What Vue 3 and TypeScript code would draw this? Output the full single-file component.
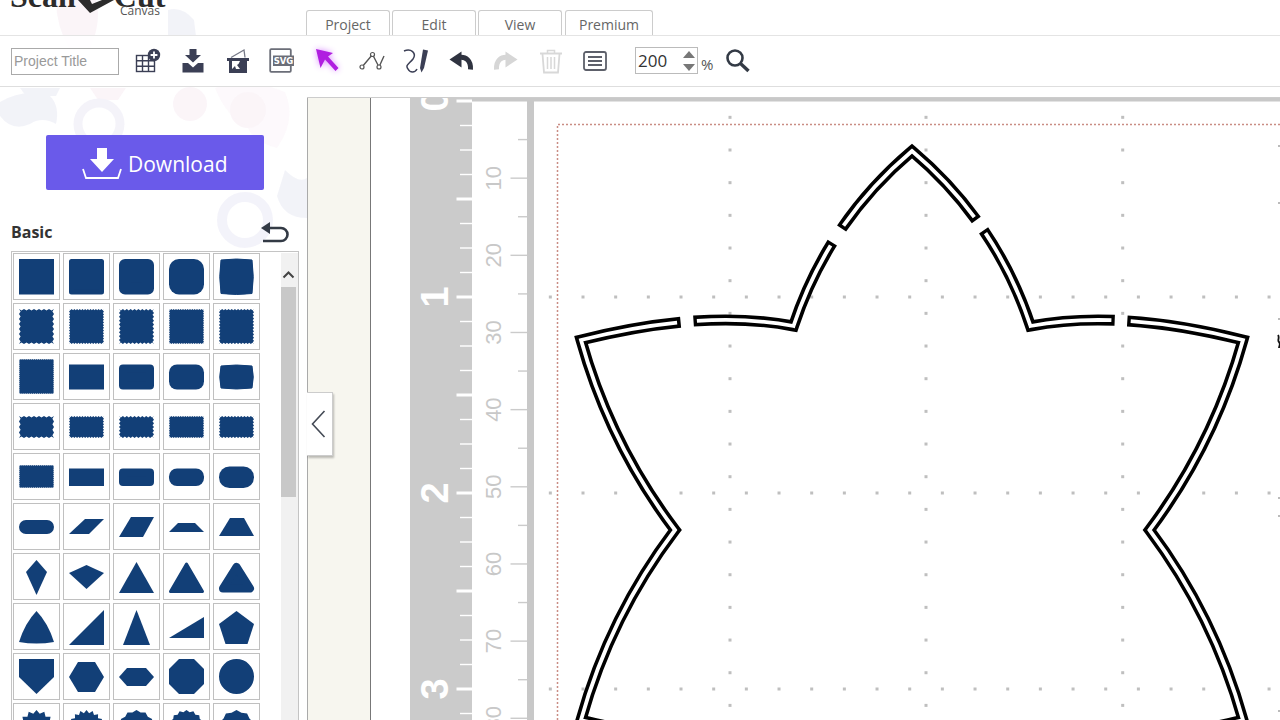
<script setup lang="ts">
type Pt = [number, number]

interface Shape {
  d: string
  sw?: number
}

// ---- shape tiles (47px box, artwork spans roughly 6..41) ----
function poly(points: number[][], sw = 0): Shape {
  return { d: 'M' + points.map((p) => p.join(' ')).join('L') + 'Z', sw }
}

function rect(y0: number, y1: number, r = 0): Shape {
  return poly(
    [
      [6 + r, y0 + r],
      [41 - r, y0 + r],
      [41 - r, y1 - r],
      [6 + r, y1 - r],
    ],
    r * 2,
  )
}

function barrel(y0: number, y1: number): Shape {
  return {
    d: `M8 ${y0 + 1}Q23.5 ${y0 - 1} 39 ${y0 + 1}Q41.5 ${(y0 + y1) / 2} 39 ${y1 - 1}Q23.5 ${y1 + 1} 8 ${y1 - 1}Q5.5 ${(y0 + y1) / 2} 8 ${y0 + 1}Z`,
    sw: 1,
  }
}

// postage-stamp outline: teeth walked along all four edges
function stamp(y0: number, y1: number, step: number, amp: number): Shape {
  const pts: number[][] = []
  const edge = (ax: number, ay: number, bx: number, by: number, nx: number, ny: number) => {
    const len = Math.hypot(bx - ax, by - ay)
    const n = Math.round(len / step)
    for (let i = 0; i < n; i++) {
      const t = i / n
      const m = (i + 0.5) / n
      pts.push([ax + (bx - ax) * t, ay + (by - ay) * t])
      pts.push([ax + (bx - ax) * m + nx * amp, ay + (by - ay) * m + ny * amp])
    }
  }
  edge(6, y0, 41, y0, 0, 1)
  edge(41, y0, 41, y1, -1, 0)
  edge(41, y1, 6, y1, 0, -1)
  edge(6, y1, 6, y0, 1, 0)
  return poly(pts.map((p) => [+p[0].toFixed(2), +p[1].toFixed(2)]))
}

function burst(n: number, r1: number, r2: number): Shape {
  const pts: number[][] = []
  for (let i = 0; i < n * 2; i++) {
    const a = (Math.PI * i) / n - Math.PI / 2
    const r = i % 2 ? r2 : r1
    pts.push([+(23.5 + r * Math.cos(a)).toFixed(2), +(25 + r * Math.sin(a)).toFixed(2)])
  }
  return poly(pts)
}

const shapes: Shape[] = [
  rect(6, 41.5),
  rect(6, 41.5, 2.5),
  rect(6, 41.5, 6),
  rect(6, 41.5, 10),
  barrel(6, 41.5),

  stamp(6, 41, 5, 1.6),
  stamp(6, 41, 2.6, 1.2),
  stamp(6, 41, 4, 1.5),
  stamp(6, 41, 2.4, 0.9),
  stamp(6, 41, 3.2, 1.3),

  stamp(6, 41, 2, 0.8),
  rect(11.5, 36.5),
  rect(11.5, 36.5, 4),
  rect(11.5, 36.5, 8),
  barrel(12, 36),

  stamp(13, 35, 5, 1.6),
  stamp(13, 35, 2.6, 1.2),
  stamp(13, 35, 4, 1.5),
  stamp(13, 35, 2.4, 0.9),
  stamp(13, 35, 3.2, 1.3),

  stamp(12, 35, 2, 0.8),
  rect(15.5, 33),
  rect(15.5, 33, 4),
  rect(15.5, 33, 8),
  rect(13.5, 35, 10.5),

  rect(17, 31, 7),
  poly([[6, 31], [22, 16], [41, 16], [26, 31]]),
  poly([[6, 34], [18, 14], [41, 14], [30, 34]]),
  poly([[6, 29], [15, 20], [32, 20], [41, 29]]),
  poly([[6, 33], [17, 15], [31, 15], [41, 33]]),

  poly([[23.5, 7], [34, 19], [23.5, 42], [13, 19]]),
  { d: 'M6 20Q15 16 23.5 12Q32 16 41 20L23.5 36Z' },
  poly([[23.5, 9], [41, 40], [6, 40]]),
  poly([[23.5, 11], [39.5, 38.5], [7.5, 38.5]], 3),
  poly([[23.5, 14], [37, 35.5], [10, 35.5]], 8),

  { d: 'M23.5 8Q35 20 41 39Q23.5 42 6 39Q12 20 23.5 8Z' },
  poly([[41, 7], [41, 42], [6, 42]]),
  poly([[23.5, 7], [37, 42], [10, 42]]),
  poly([[41, 14], [41, 35], [6, 35]]),
  poly([[23.5, 8], [41, 21], [34.5, 41], [12.5, 41], [6, 21]]),

  poly([[6, 6], [41, 6], [41, 24], [23.5, 41], [6, 24]]),
  poly([[6, 24], [15, 9], [32, 9], [41, 24], [32, 39], [15, 39]]),
  poly([[6, 24], [14, 15], [33, 15], [41, 24], [33, 33], [14, 33]]),
  poly([[16, 6], [31, 6], [41, 16], [41, 31], [31, 41], [16, 41], [6, 31], [6, 16]]),
  { d: 'M6 23.5A17.5 17.5 0 0 1 41 23.5A17.5 17.5 0 0 1 6 23.5Z' },

  burst(14, 18, 14.5),
  burst(18, 18, 15),
  burst(12, 18, 16),
  burst(16, 18, 16),
  burst(10, 18, 16),
]

// ---- rulers ----
const inchTicks = Array.from({ length: 26 }, (_, k) => ({ y: 101 + k * 24.5, major: k % 4 === 0 }))
const inchLabels = [0, 1, 2, 3].map((n) => ({ n, y: 101 + n * 196 }))
const mmTicks = Array.from({ length: 17 }, (_, k) => ({ y: 101 + k * 38.58, major: k % 2 === 0 }))
const mmLabels = [10, 20, 30, 40, 50, 60, 70, 80].map((n) => ({ n, y: 101 + n * 7.716 }))

// ---- canvas grid dots ----
const dots: Pt[] = []
for (const x of [730, 926, 1122.7]) {
  for (let k = 0; k < 19; k++) dots.push([x, 101 + 16.33 + k * 32.67])
}
for (const y of [297, 493, 689]) {
  for (let k = 0; k < 23; k++) dots.push([534 + 16.33 + k * 32.67, y])
}

// ---- star outline, cut into runs between the gaps ----
interface Curve {
  a: Pt
  c: Pt
  b: Pt
}
const lerp = (p: Pt, q: Pt, t: number): Pt => [p[0] + (q[0] - p[0]) * t, p[1] + (q[1] - p[1]) * t]
const blossom = (k: Curve, t0: number, t1: number): Pt => lerp(lerp(k.a, k.c, t0), lerp(k.c, k.b, t0), t1)
const fmt = (p: Pt) => `${p[0].toFixed(1)} ${p[1].toFixed(1)}`

const apex: Pt = [912, 151]
const notchR: Pt = [1030.5, 326]
const notchL: Pt = [793.5, 326]
const tipR: Pt = [1243, 340]
const tipL: Pt = [581, 340]
const sideR: Pt = [1149.5, 530]
const sideL: Pt = [675, 530]
const lowR: Pt = [1243, 720]
const lowL: Pt = [581, 720]

const curves: Record<string, Curve> = {
  aToNr: { a: apex, c: [996, 222], b: notchR },
  nlToA: { a: notchL, c: [828, 222], b: apex },
  nrToTr: { a: notchR, c: [1120, 309], b: tipR },
  tlToNl: { a: tipL, c: [704, 309], b: notchL },
  trToSr: { a: tipR, c: [1214, 444], b: sideR },
  srToLr: { a: sideR, c: [1214, 616], b: lowR },
  lrOff: { a: lowR, c: [1120, 751], b: [1030.5, 734] },
  offLl: { a: [793.5, 734], c: [704, 751], b: lowL },
  llToSl: { a: lowL, c: [610, 616], b: sideL },
  slToTl: { a: sideL, c: [610, 444], b: tipL },
}

type Part = [string, number, number]
const runs: Part[][] = [
  [['nlToA', 0.51, 1], ['aToNr', 0, 0.44]],
  [['aToNr', 0.5, 1], ['nrToTr', 0, 0.435]],
  [['nrToTr', 0.495, 1], ['trToSr', 0, 1], ['srToLr', 0, 1], ['lrOff', 0, 1]],
  [['offLl', 0, 1], ['llToSl', 0, 1], ['slToTl', 0, 1], ['tlToNl', 0, 0.43]],
  [['tlToNl', 0.49, 1], ['nlToA', 0, 0.43]],
]

function runPath(run: Part[], inset: number): string {
  let d = ''
  run.forEach(([name, t0, t1], i) => {
    const k = curves[name]
    const from = i === 0 ? t0 + inset : t0
    const to = i === run.length - 1 ? t1 - inset : t1
    if (i === 0) d += 'M' + fmt(blossom(k, from, from))
    d += 'Q' + fmt(blossom(k, from, to)) + ' ' + fmt(blossom(k, to, to))
  })
  return d
}

const outerPaths = runs.map((r) => runPath(r, 0))
const innerPaths = runs.map((r) => runPath(r, 0.016))

const tabs = ['Project', 'Edit', 'View', 'Premium']
</script>

<template>
  <div class="app">
    <svg class="watermark" width="380" height="260" viewBox="0 0 380 260" aria-hidden="true">
      <g fill="#f8edf4">
        <path d="M56 0h40q6 20-6 50q-10 20-20 0q-14-24-14-50z" />
        <circle cx="190" cy="104" r="17" />
        <circle cx="248" cy="110" r="18" />
        <path d="M215 88q30-12 70 4q12 28-8 56q-24-6-30-22q-20-8-32-38z" fill-opacity="0.55" />
        <path d="M90 88h36l-8 12h-20z" />
      </g>
      <g fill="#e9eaf4">
        <path d="M168 10q14-4 26 10l2 16h-28z" />
        <path d="M0 102q24-14 50-6q10 10 6 28q-14-8-26 0q-18 8-30-8z" />
        <path d="M20 88h40l-4 8h-30z" />
        <path d="M285 170q14 14 22 8v40q-24 0-30-22z" />
      </g>
      <circle cx="99" cy="124" r="21" fill="none" stroke="#eceaf5" stroke-width="9" />
      <circle cx="245" cy="220" r="23" fill="none" stroke="#ebeaf6" stroke-width="10" />
    </svg>

    <header class="topbar">
      <div class="logo">
        <span>Scan</span>
        <svg class="logo-mark" width="36" height="14" viewBox="0 0 36 14">
          <path d="M0 0H12L14 4L24 0H36L12 13Z" fill="#2c2c2c" />
        </svg>
        <span>Cut</span>
        <span class="logo-sub">Canvas</span>
      </div>
      <nav class="tabs">
        <button v-for="t in tabs" :key="t" class="tab">{{ t }}</button>
      </nav>
    </header>

    <div class="toolbar">
      <input class="title-input" placeholder="Project Title" />
      <div class="tools">
        <span class="tool">
          <svg width="26" height="26" viewBox="0 0 26 26">
            <g fill="none" stroke="#3b3f55" stroke-width="1.4">
              <rect x="1.5" y="7.5" width="18" height="16" />
              <path d="M7.5 7.5v16M13.5 7.5v16M1.5 12.8h18M1.5 18.2h18" />
            </g>
            <circle cx="19" cy="7" r="6.2" fill="#3b3f55" />
            <path d="M19 3.6v6.8M15.6 7h6.8" stroke="#fff" stroke-width="1.8" />
          </svg>
        </span>
        <span class="tool">
          <svg width="26" height="26" viewBox="0 0 26 26">
            <path d="M9.500 1h7v6h4.500L13 14.500 5 7h4.500z" fill="#3b3f55" />
            <path d="M2.500 15h5.500l5 4.500 5-4.500h5.500v9.500H2.500z" fill="#3b3f55" />
          </svg>
        </span>
        <span class="tool">
          <svg width="26" height="26" viewBox="0 0 26 26">
            <path d="M6 9.500L19 2l1 7.500" fill="none" stroke="#777a88" stroke-width="1.3" />
            <path d="M2 10h22v3h-2v12H4V13H2z" fill="#3b3f55" />
            <path d="M7 13h8q-1 3-3 4l3 4h-4l-1-3-3 3z" fill="#fff" />
          </svg>
        </span>
        <span class="tool">
          <svg width="26" height="26" viewBox="0 0 26 26">
            <rect x="1.200" y="1.200" width="20.600" height="22.600" fill="#fff" stroke="#6b6e78" stroke-width="1.800" rx="1" />
            <rect x="4" y="7.500" width="21" height="10.500" fill="#6b6e78" />
            <text class="svg-word" x="14.500" y="16" text-anchor="middle">SVG</text>
          </svg>
        </span>
        <span class="tool">
          <svg class="arrow-glow" width="26" height="26" viewBox="0 0 26 26">
            <path d="M2 1l17 4-5 3.500L24.500 20l-3 3L11 11.500 6.500 20z" fill="#b01fe0" />
          </svg>
        </span>
        <span class="tool">
          <svg width="26" height="26" viewBox="0 0 26 26">
            <path d="M3 19L13.500 6.500L20 19L25 8" fill="none" stroke="#555" stroke-width="1.400" />
            <circle cx="3" cy="19" r="2" fill="#fff" stroke="#555" stroke-width="1.200" />
            <circle cx="13.500" cy="6.500" r="2" fill="#fff" stroke="#555" stroke-width="1.200" />
            <circle cx="20" cy="19" r="2" fill="#fff" stroke="#555" stroke-width="1.200" />
          </svg>
        </span>
        <span class="tool">
          <svg width="26" height="26" viewBox="0 0 26 26">
            <path d="M1 3C8 0 14 5 10 11C6 16 2 17 5 21C7 25 12 25 14 21" fill="none" stroke="#3b3f55" stroke-width="1.500" />
            <path d="M20 1.500L25 2.500L21 20L18.500 24.500L17 20z" fill="#3b3f55" />
          </svg>
        </span>
        <span class="tool">
          <svg width="26" height="26" viewBox="0 0 26 26">
            <path d="M1.500 11.500L13.500 3.500v16z" fill="#2f3340" />
            <path d="M11 9.500c7-1 12 3 11.500 12" fill="none" stroke="#2f3340" stroke-width="5" />
          </svg>
        </span>
        <span class="tool">
          <svg width="26" height="26" viewBox="0 0 26 26">
            <path d="M24.500 11.500L12.500 3.500v16z" fill="#d6d6d6" />
            <path d="M15 9.500c-7-1-12 3-11.500 12" fill="none" stroke="#d6d6d6" stroke-width="5" />
          </svg>
        </span>
        <span class="tool">
          <svg width="26" height="26" viewBox="0 0 26 26" fill="none" stroke="#d8d8d8">
            <path d="M2 5.500h22" stroke-width="2" />
            <path d="M9.500 5V2.500h7V5" stroke-width="1.500" />
            <path d="M4.500 6l1.500 18.500h14L21.500 6" stroke-width="1.800" />
            <path d="M9.500 9v12M13 9v12M16.500 9v12" stroke-width="1.500" />
          </svg>
        </span>
        <span class="tool">
          <svg width="26" height="26" viewBox="0 0 26 26" fill="none" stroke="#5d606a">
            <rect x="2" y="4" width="22" height="18" rx="2" stroke-width="1.800" />
            <path d="M6 9h14M6 13h14M6 17h14" stroke-width="1.800" />
          </svg>
        </span>
      </div>

      <div class="zoom-box">
        <span class="zoom-value">200</span>
        <span class="spin">
          <i class="spin-up"></i>
          <i class="spin-down"></i>
        </span>
      </div>
      <span class="percent">%</span>
      <svg class="magnifier" width="25" height="25" viewBox="0 0 25 25" fill="none" stroke="#333a45">
        <circle cx="10" cy="10" r="7.500" stroke-width="2.600" />
        <path d="M15.500 15.500L23.500 23" stroke-width="3.400" />
      </svg>
    </div>

    <main class="workspace">
      <aside class="sidebar">
        <button class="download">
          <svg width="40" height="32" viewBox="0 0 40 32">
            <path d="M15 0h10v11h7L20 24 8 11h7z" fill="#fff" />
            <path d="M1 21l3 9h32l3-9" fill="none" stroke="#fff" stroke-width="1.800" />
          </svg>
          <span>Download</span>
        </button>

        <div class="section-head">
          <span class="section-title">Basic</span>
          <svg width="30" height="24" viewBox="0 0 30 24" fill="none" stroke="#333a45">
            <path d="M8 8h13a6.500 6.500 0 0 1 0 13H3" stroke-width="2.600" />
            <path d="M1 8l9-6v12z" fill="#333a45" stroke="none" />
          </svg>
        </div>

        <div class="shape-panel">
          <div class="shape-grid">
            <div v-for="(s, i) in shapes" :key="i" class="tile">
              <svg width="47" height="47" viewBox="0 0 47 47">
                <path class="tile-shape" :d="s.d" :stroke-width="s.sw ?? 0" />
              </svg>
            </div>
          </div>
          <div class="scrollbar">
            <div class="scroll-arrow">
              <svg width="13" height="9" viewBox="0 0 13 9" fill="none" stroke="#444">
                <path d="M1.500 7.500L6.500 2.500L11.500 7.500" stroke-width="2" />
              </svg>
            </div>
            <div class="scroll-thumb"></div>
          </div>
        </div>
      </aside>

      <section class="stage">
        <div class="side-panel">
          <button class="collapse">
            <svg width="15" height="28" viewBox="0 0 15 28" fill="none" stroke="#444a55">
              <path d="M13.500 1L1.500 14L13.500 27" stroke-width="1.600" />
            </svg>
          </button>
        </div>
        <div class="gutter"></div>

        <svg class="ruler-inch" width="62" height="622" viewBox="410 98 62 622">
          <rect
            v-for="t in inchTicks"
            :key="t.y"
            :x="t.major ? 456.500 : 460"
            :y="t.y - (t.major ? 1.500 : 0.700)"
            :width="t.major ? 15.500 : 12"
            :height="t.major ? 3 : 1.400"
            fill="#fff"
          />
          <text
            v-for="l in inchLabels"
            :key="l.n"
            class="inch-label"
            text-anchor="middle"
            :transform="`translate(448 ${l.y}) rotate(-90)`"
          >{{ l.n }}</text>
        </svg>

        <svg class="ruler-mm" width="55" height="622" viewBox="472 98 55 622">
          <rect x="472" y="98" width="55" height="3.500" fill="#c8c8c8" />
          <rect
            v-for="t in mmTicks.slice(1)"
            :key="t.y"
            :x="t.major ? 510.500 : 518"
            :y="t.y - 0.700"
            :width="t.major ? 16.500 : 9"
            height="1.400"
            fill="#cbcbcb"
          />
          <text
            v-for="l in mmLabels"
            :key="l.n"
            class="mm-label"
            text-anchor="middle"
            :transform="`translate(500.500 ${l.y}) rotate(-90)`"
          >{{ l.n }}</text>
        </svg>
        <div class="ruler-edge"></div>

        <svg class="canvas" width="746" height="622" viewBox="534 98 746 622">
          <rect x="534" y="98" width="746" height="3.500" fill="#c8c8c8" />
          <rect
            v-for="(p, i) in dots"
            :key="i"
            :x="p[0] - 1.500"
            :y="p[1] - 1.500"
            width="3"
            height="3"
            fill="#bfbfbf"
          />
          <path
            d="M1280 124.500H557.500V720"
            fill="none"
            stroke="#c98d84"
            stroke-width="1.500"
            stroke-dasharray="2 2"
          />
          <path
            v-for="d in outerPaths"
            :key="d"
            :d="d"
            fill="none"
            stroke="#000"
            stroke-width="11"
            stroke-miterlimit="10"
          />
          <path
            v-for="d in innerPaths"
            :key="d"
            :d="d"
            fill="none"
            stroke="#fff"
            stroke-width="3.800"
            stroke-miterlimit="10"
          />
          <path d="M1278 335c2 3-1 5 1 7s0 4 0 6" fill="none" stroke="#111" stroke-width="1.800" />
          <path d="M1279 145v2M1279 202v2M1279 318v2M1279 497v2M1279 515v2M1279 710v2" stroke="#777" />
        </svg>
      </section>
    </main>
  </div>
</template>

<style>
html,
body {
  margin: 0;
  overflow: hidden;
  background: #fff;
}
</style>

<style scoped>
.app {
  position: relative;
  display: flex;
  flex-direction: column;
  width: 1280px;
  height: 720px;
  overflow: hidden;
  font-family: 'Open Sans', 'Liberation Sans', sans-serif;
}
.watermark {
  position: absolute;
  top: 0;
  left: 0;
  opacity: 0.55;
}

/* header */
.topbar {
  position: relative;
  display: flex;
  align-items: flex-end;
  flex: none;
  height: 36px;
  box-sizing: border-box;
  border-bottom: 1px solid #e4e4e4;
  overflow: hidden;
}
.logo {
  position: relative;
  display: flex;
  align-items: flex-start;
  align-self: flex-start;
  width: 306px;
  box-sizing: border-box;
  padding-left: 10px;
  margin-top: -20px;
  font: bold 32px/32px 'Liberation Serif', serif;
  color: #2c2c2c;
}
.logo-mark {
  margin: 20px 0 0 2px;
}
.logo-sub {
  position: absolute;
  left: 120px;
  top: 23px;
  font: 12px/15px 'Open Sans', sans-serif;
  color: #555;
}
.tabs {
  display: flex;
  gap: 2px;
}
.tab {
  width: 84px;
  height: 25px;
  padding: 3px 0 0;
  box-sizing: border-box;
  border: 1px solid #ccc;
  border-bottom: 0;
  border-radius: 3px 3px 0 0;
  background: #fff;
  color: #666;
  font: 14px/20px 'Open Sans', sans-serif;
}
.tab:last-child {
  width: 88px;
  margin-left: 1px;
}

/* toolbar */
.toolbar {
  position: relative;
  display: flex;
  align-items: center;
  flex: none;
  height: 51px;
  box-sizing: border-box;
  padding: 0 0 1px 11px;
  border-bottom: 1px solid #dedede;
  background: rgba(255, 255, 255, 0.88);
}
.title-input {
  width: 108px;
  height: 27px;
  box-sizing: border-box;
  margin-top: 1px;
  padding: 0 0 0 2px;
  border: 1px solid #aaa;
  background: #fff;
  font: 14px 'Liberation Sans', sans-serif;
}
.title-input::placeholder {
  color: #999;
  opacity: 1;
}
.tools {
  display: flex;
  margin-left: 7px;
}
.tool {
  display: flex;
  align-items: center;
  justify-content: center;
  width: 44.700px;
  height: 30px;
}
.svg-word {
  font: bold 8.500px 'DejaVu Sans', sans-serif;
  fill: #fff;
}
.arrow-glow {
  filter: drop-shadow(0 0 3px #d98bff);
}
.zoom-box {
  display: flex;
  align-items: center;
  justify-content: space-between;
  width: 63px;
  height: 27px;
  box-sizing: border-box;
  margin-left: 17.500px;
  padding: 0 2px 0 2px;
  border: 1px solid #bbb;
  background: #fff;
}
.zoom-value {
  font: 17px 'Open Sans', sans-serif;
  color: #333;
}
.spin {
  display: flex;
  flex-direction: column;
  gap: 6px;
}
.spin-up,
.spin-down {
  display: block;
  width: 0;
  height: 0;
  border-left: 6.500px solid transparent;
  border-right: 6.500px solid transparent;
}
.spin-up {
  border-bottom: 7px solid #777;
}
.spin-down {
  border-top: 7px solid #777;
}
.percent {
  margin: 7px 0 0 3px;
  font: 15px 'Open Sans', sans-serif;
  color: #555;
}
.magnifier {
  margin-left: 12px;
}

/* left column */
.workspace {
  position: relative;
  display: flex;
  flex: 1;
  min-height: 0;
}
.sidebar {
  display: flex;
  flex-direction: column;
  flex: none;
  width: 307px;
}
.download {
  display: flex;
  align-items: center;
  flex: none;
  gap: 6px;
  width: 218px;
  height: 55px;
  box-sizing: border-box;
  margin: 48px 0 0 46px;
  padding: 3px 0 0 36px;
  border: 0;
  border-radius: 2px;
  background: #6a5aea;
  color: #fff;
  font: 21px 'Open Sans', sans-serif;
}
.section-head {
  display: flex;
  align-items: center;
  justify-content: space-between;
  flex: none;
  width: 279px;
  height: 28px;
  margin: 28px 0 5px 11px;
}
.section-title {
  font-size: 16px;
  font-weight: 700;
  color: #333;
}
.shape-panel {
  display: flex;
  flex: none;
  width: 288px;
  height: 600px;
  box-sizing: border-box;
  margin-left: 11px;
  padding: 1px 0 0 1px;
  border: 1px solid #c4c4c4;
  border-bottom: 0;
  background: #fff;
}
.shape-grid {
  display: grid;
  grid-template-columns: repeat(5, 47px);
  grid-auto-rows: 47px;
  gap: 3px;
  align-content: start;
  width: 247px;
}
.tile {
  width: 47px;
  height: 47px;
  box-sizing: border-box;
  border: 1px solid #c0c0c0;
  background: #fff;
}
.tile svg {
  display: block;
  margin: -1px;
}
.tile-shape {
  fill: #123f77;
  stroke: #123f77;
  stroke-linejoin: round;
}
.scrollbar {
  width: 17px;
  margin-left: 21px;
  background: #f1f1f1;
}
.scroll-arrow {
  display: flex;
  align-items: center;
  justify-content: center;
  width: 15px;
  height: 34px;
  padding-top: 9px;
  box-sizing: border-box;
}
.scroll-thumb {
  width: 15px;
  height: 210px;
  background: #c8c8c8;
}

/* stage */
.stage {
  position: relative;
  display: flex;
  flex: 1;
  min-width: 0;
  margin-top: 10px;
  border-top: 1px solid #ccc;
  background: #fff;
}
.side-panel {
  flex: none;
  width: 64px;
  box-sizing: border-box;
  border-left: 1px solid #aaa;
  border-right: 1px solid #777;
  background: #f7f6ef;
}
.collapse {
  position: absolute;
  top: 294px;
  left: 0;
  display: flex;
  align-items: center;
  justify-content: center;
  width: 26px;
  height: 64px;
  padding: 0 2px 0 0;
  box-sizing: border-box;
  border: 1px solid #ccc;
  border-left: 0;
  background: #fff;
  box-shadow: 1px 2px 2px rgba(0, 0, 0, 0.25);
}
.gutter {
  flex: none;
  width: 39px;
}
.ruler-inch {
  flex: none;
  background: #cbcbcb;
}
.inch-label {
  font: bold 38px 'Liberation Sans', sans-serif;
  fill: #fff;
}
.ruler-mm {
  flex: none;
}
.mm-label {
  font: 22px 'Liberation Sans', sans-serif;
  fill: #c8c8c8;
}
.ruler-edge {
  flex: none;
  width: 7px;
  background: #c8c8c8;
}
.canvas {
  flex: none;
}
</style>
